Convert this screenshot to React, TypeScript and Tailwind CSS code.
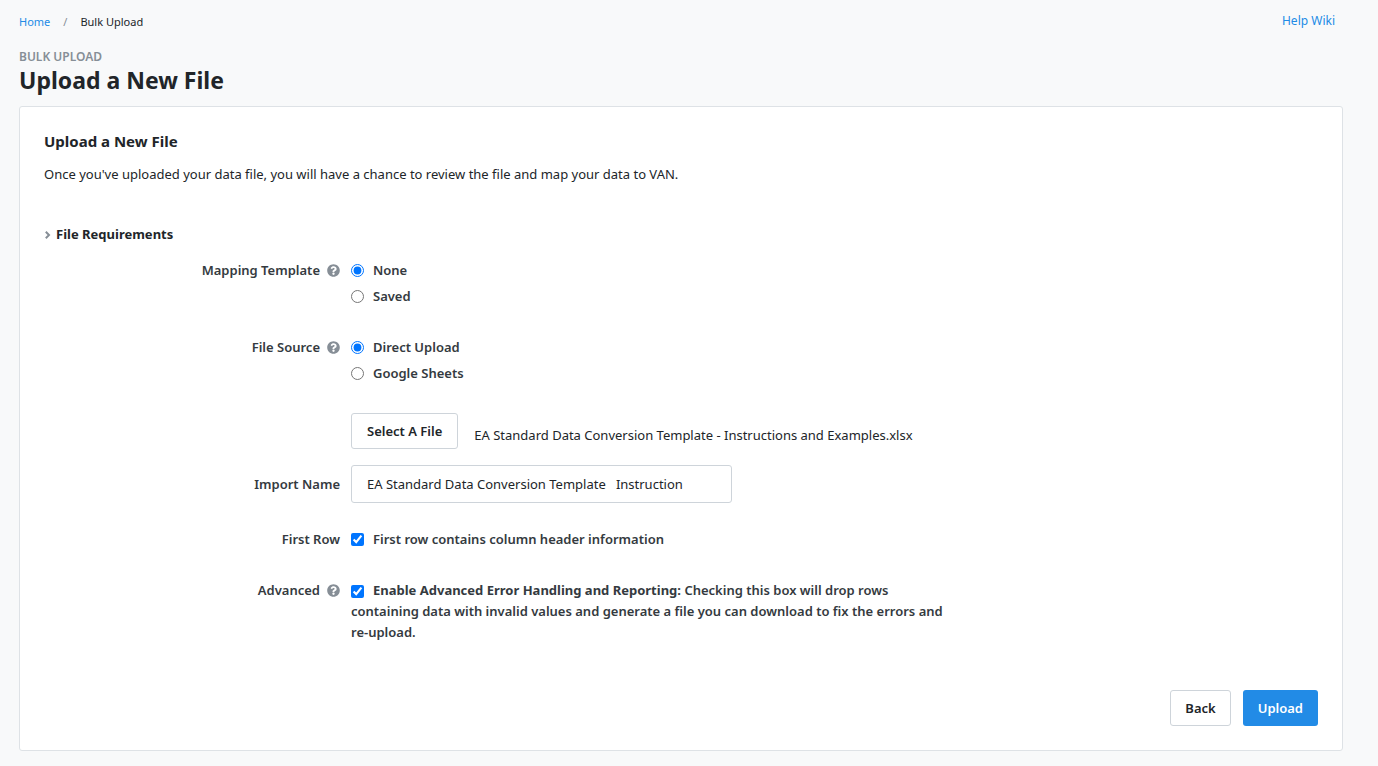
import { useState } from 'react';
import type { ReactNode } from 'react';

function HelpIcon({ label }: { label: string }) {
  return (
    <button type="button" aria-label={`Help: ${label}`} className="shrink-0">
      <svg viewBox="0 0 512 512" className="size-[13px] fill-[#868e96]">
        <path d="M504 256c0 137-111 248-248 248S8 393 8 256 119 8 256 8s248 111 248 248zM262.7 90c-54.5 0-89.3 23-116.5 63.8-3.6 5.3-2.4 12.4 2.7 16.3l34.7 26.3c5.2 3.9 12.6 3 16.7-2.1 17.8-22.6 30.1-35.8 57.3-35.8 20.4 0 45.7 13.2 45.7 33 0 15-12.4 22.7-32.5 34C247.1 238.5 216 254.9 216 296v4c0 6.6 5.4 12 12 12h56c6.6 0 12-5.4 12-12v-1.3c0-28.500 83.200-29.600 83.200-106.700 0-58-60.200-102-116.500-102zM256 338c-25.400 0-46 20.600-46 46s20.600 46 46 46 46-20.600 46-46-20.600-46-46-46z" />
      </svg>
    </button>
  );
}

function Row({ label, htmlFor, help, center, children }: {
  label?: string;
  htmlFor?: string;
  help?: boolean;
  center?: boolean;
  children: ReactNode;
}) {
  return (
    <div className={`grid grid-cols-[296px_minmax(0,600px)] gap-[11px] ${center ? 'items-center' : 'items-start'}`}>
      <div className="flex items-center justify-end gap-[7px] font-semibold text-[#343a40]">
        {label && (htmlFor ? <label htmlFor={htmlFor}>{label}</label> : <span>{label}</span>)}
        {help && label && <HelpIcon label={label} />}
      </div>
      <div>{children}</div>
    </div>
  );
}

function RadioGroup({ name, options }: { name: string; options: string[] }) {
  const [value, setValue] = useState(options[0]);

  return (
    <div role="radiogroup" aria-label={name} className="flex flex-col items-start gap-[5px]">
      {options.map((option) => (
        <label key={option} className="flex items-center gap-[9px] font-semibold text-[#343a40]">
          <input
            type="radio"
            name={name}
            checked={value === option}
            onChange={() => setValue(option)}
            className="size-[13px]"
          />
          {option}
        </label>
      ))}
    </div>
  );
}

const outlineButton = 'h-9 rounded-[3px] border border-[#ced4da] bg-white font-semibold text-[#212529]';

export default function App() {
  const [importName, setImportName] = useState('EA Standard Data Conversion Template   Instruction');

  return (
    <div className="min-h-screen bg-[#f8f9fa] pt-[11px] pr-[35px] pb-[15px] pl-[19px] font-['Noto_Sans','Open_Sans',sans-serif] text-[13px] leading-[21px] text-[#212529]">
      <header>
        <div className="flex items-start justify-between pr-2">
          <nav aria-label="Breadcrumb" className="flex gap-[13px] text-[11px] leading-[22px]">
            <a href="#" className="text-[#228be6]">Home</a>
            <span className="text-[#868e96]">/</span>
            <span>Bulk Upload</span>
          </nav>
          <a href="#" className="text-xs leading-5 text-[#228be6]">Help Wiki</a>
        </div>
        <div className="mt-[14px] text-xs leading-5 font-semibold text-[#868e96]">BULK UPLOAD</div>
        <h1 className="text-[23px] leading-[26px] font-bold">Upload a New File</h1>
      </header>

      <main className="mt-[13px] rounded-[3px] border border-[#dee2e6] bg-white px-6 pt-[22px] pb-6">
        <h2 className="text-[15px] leading-6 font-bold">Upload a New File</h2>
        <p className="mt-[11px]">
          Once you've uploaded your data file, you will have a chance to review the file and map your data to VAN.
        </p>

        <button type="button" className="mt-[39px] flex items-center gap-1 font-bold">
          <svg viewBox="0 0 8 8" className="size-2 fill-none stroke-[#868e96] stroke-2">
            <path d="M1.8 .8 5 4 1.8 7.200" />
          </svg>
          File Requirements
        </button>

        <form className="mt-[15px]" onSubmit={(e) => e.preventDefault()}>
          <div className="flex flex-col gap-[30px]">
            <Row label="Mapping Template" help>
              <RadioGroup name="Mapping Template" options={['None', 'Saved']} />
            </Row>
            <Row label="File Source" help>
              <RadioGroup name="File Source" options={['Direct Upload', 'Google Sheets']} />
            </Row>
          </div>

          <div className="mt-[29px] flex flex-col gap-4">
            <Row>
              <div className="flex items-center gap-4">
                <button type="button" className={`${outlineButton} px-[15px]`}>Select A File</button>
                <span className="pt-2">EA Standard Data Conversion Template - Instructions and Examples.xlsx</span>
              </div>
            </Row>
            <Row label="Import Name" htmlFor="import-name" center>
              <input
                id="import-name"
                type="text"
                value={importName}
                onChange={(e) => setImportName(e.target.value)}
                className="block h-[38px] w-[381px] rounded-[3px] border border-[#ced4da] bg-white px-[15px]"
              />
            </Row>
          </div>

          <div className="mt-[26px] flex flex-col gap-[30px]">
            <Row label="First Row">
              <label className="flex items-center gap-[9px] font-semibold text-[#343a40]">
                <input type="checkbox" defaultChecked className="size-[13px]" />
                First row contains column header information
              </label>
            </Row>
            <Row label="Advanced" help>
              <label className="block font-semibold text-[#343a40]">
                <input type="checkbox" defaultChecked className="mr-[9px] size-[13px] align-[-3px]" />
                <span className="font-bold">Enable Advanced Error Handling and Reporting:</span>{' '}
                Checking this box will drop rows containing data with invalid values and generate a file you can
                download to fix the errors and re-upload.
              </label>
            </Row>
          </div>

          <div className="mt-[47px] flex justify-end gap-3">
            <button type="button" className={`${outlineButton} px-[14px]`}>Back</button>
            <button type="submit" className="h-9 rounded-[3px] bg-[#228be6] px-[15px] font-semibold text-white">
              Upload
            </button>
          </div>
        </form>
      </main>
    </div>
  );
}
